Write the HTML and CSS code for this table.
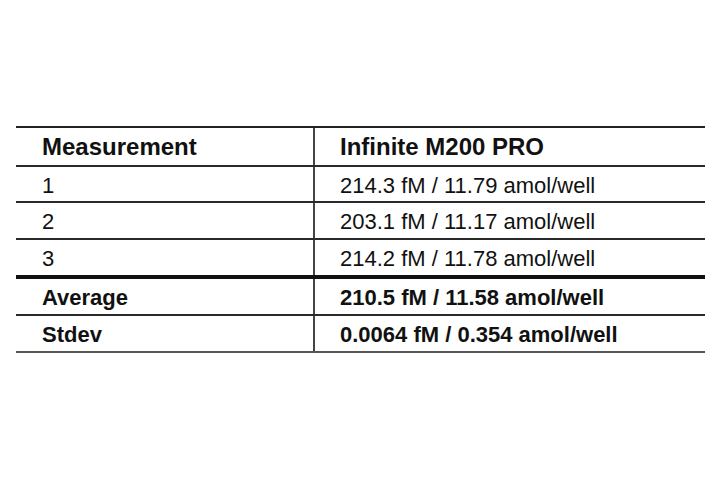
FILE: index.html
```html
<!DOCTYPE html>
<html>
<head>
<meta charset="utf-8">
<link rel="stylesheet" href="styles.css">
</head>
<body>
<div class="table">
  <div class="row head">
    <div class="cell c1">Measurement</div>
    <div class="cell c2">Infinite M200 PRO</div>
  </div>
  <div class="row r1">
    <div class="cell c1">1</div>
    <div class="cell c2">214.3 fM / 11.79 amol/well</div>
  </div>
  <div class="row r2">
    <div class="cell c1">2</div>
    <div class="cell c2">203.1 fM / 11.17 amol/well</div>
  </div>
  <div class="row r3">
    <div class="cell c1">3</div>
    <div class="cell c2">214.2 fM / 11.78 amol/well</div>
  </div>
  <div class="row r4 bold">
    <div class="cell c1">Average</div>
    <div class="cell c2">210.5 fM / 11.58 amol/well</div>
  </div>
  <div class="row r5 bold">
    <div class="cell c1">Stdev</div>
    <div class="cell c2">0.0064 fM / 0.354 amol/well</div>
  </div>
</div>
</body>
</html>
```
FILE: styles.css
```css
html, body {
  margin: 0;
  padding: 0;
  background: #fff;
}
body {
  font-family: "Liberation Sans", Arial, sans-serif;
  color: #111;
  width: 720px;
  height: 480px;
}
.table {
  margin: 126px 0 0 16px;
  width: 689px;
  border-top: 2px solid #222;
}
.row {
  display: grid;
  grid-template-columns: 299px 1fr;
  box-sizing: border-box;
  border-bottom: 2px solid #2a2a2a;
  font-size: 22px;
}
.cell {
  display: flex;
  align-items: center;
  padding-left: 26px;
  padding-top: 3px;
}
.c1 {
  border-right: 2px solid #444;
}
.c2 {
  padding-left: 25px;
}
.head {
  height: 39px;
  font-size: 24px;
  font-weight: bold;
}
.head .cell { padding-top: 1px; }
.r1 { height: 36px; }
.r2 { height: 37px; }
.r3 { height: 39px; border-bottom: 4px solid #111; }
.r3 .cell { padding-top: 2px; }
.r4 { height: 37px; }
.r5 { height: 37px; border-bottom-color: #555; }
.bold { font-weight: bold; }
```
